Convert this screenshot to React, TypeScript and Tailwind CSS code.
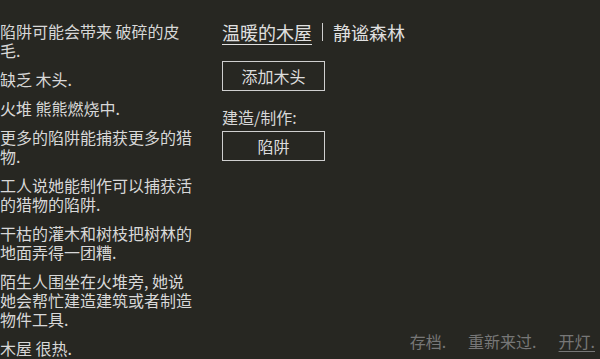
import React from "react";

const notifications: string[] = [
  "陷阱可能会带来 破碎的皮毛.",
  "缺乏 木头.",
  "火堆 熊熊燃烧中.",
  "更多的陷阱能捕获更多的猎物.",
  "工人说她能制作可以捕获活的猎物的陷阱.",
  "干枯的灌木和树枝把树林的地面弄得一团糟.",
  "陌生人围坐在火堆旁, 她说她会帮忙建造建筑或者制造物件工具.",
  "木屋 很热.",
];

function GameButton({ label }: { label: string }) {
  return (
    <div className="w-[103px] h-[30px] border border-[#cfcfcf] flex items-center justify-center text-[16px] text-[#dcdcdc] cursor-pointer">
      {label}
    </div>
  );
}

export default function App() {
  return (
    <div
      className="w-[600px] h-[359px] bg-[#272722] overflow-hidden flex text-[#d8d8d8]"
      style={{ fontFamily: '"Noto Sans CJK SC", "Noto Sans", sans-serif' }}
    >
      {/* notifications */}
      <div className="w-[200px] shrink-0 pt-[22px] flex flex-col gap-[10px] overflow-hidden">
        {notifications.map((n, i) => (
          <div key={i} className="text-[16px] leading-[19px] break-all">
            {n}
          </div>
        ))}
      </div>

      {/* main panel */}
      <div className="flex-1 ml-[22px] flex flex-col">
        <div className="pt-[20px] flex items-center text-[18px] leading-[24px]">
          <span className="underline underline-offset-[4px] text-[#e0e0e0]">温暖的木屋</span>
          <span className="mx-[10px] w-px h-[18px] bg-[#cfcfcf]" />
          <span className="text-[#e0e0e0]">静谧森林</span>
        </div>

        <div className="mt-[17px]">
          <GameButton label="添加木头" />
        </div>

        <div className="mt-[16px] text-[16px] leading-[21px]">建造/制作:</div>
        <div className="mt-[3px]">
          <GameButton label="陷阱" />
        </div>

        <div className="mt-auto flex justify-end gap-[22px] pr-[5px] pb-[8px] text-[16px] leading-[19px] text-[#777777]">
          <span>存档.</span>
          <span>重新来过.</span>
          <span className="underline underline-offset-[3px]">开灯.</span>
        </div>
      </div>
    </div>
  );
}
